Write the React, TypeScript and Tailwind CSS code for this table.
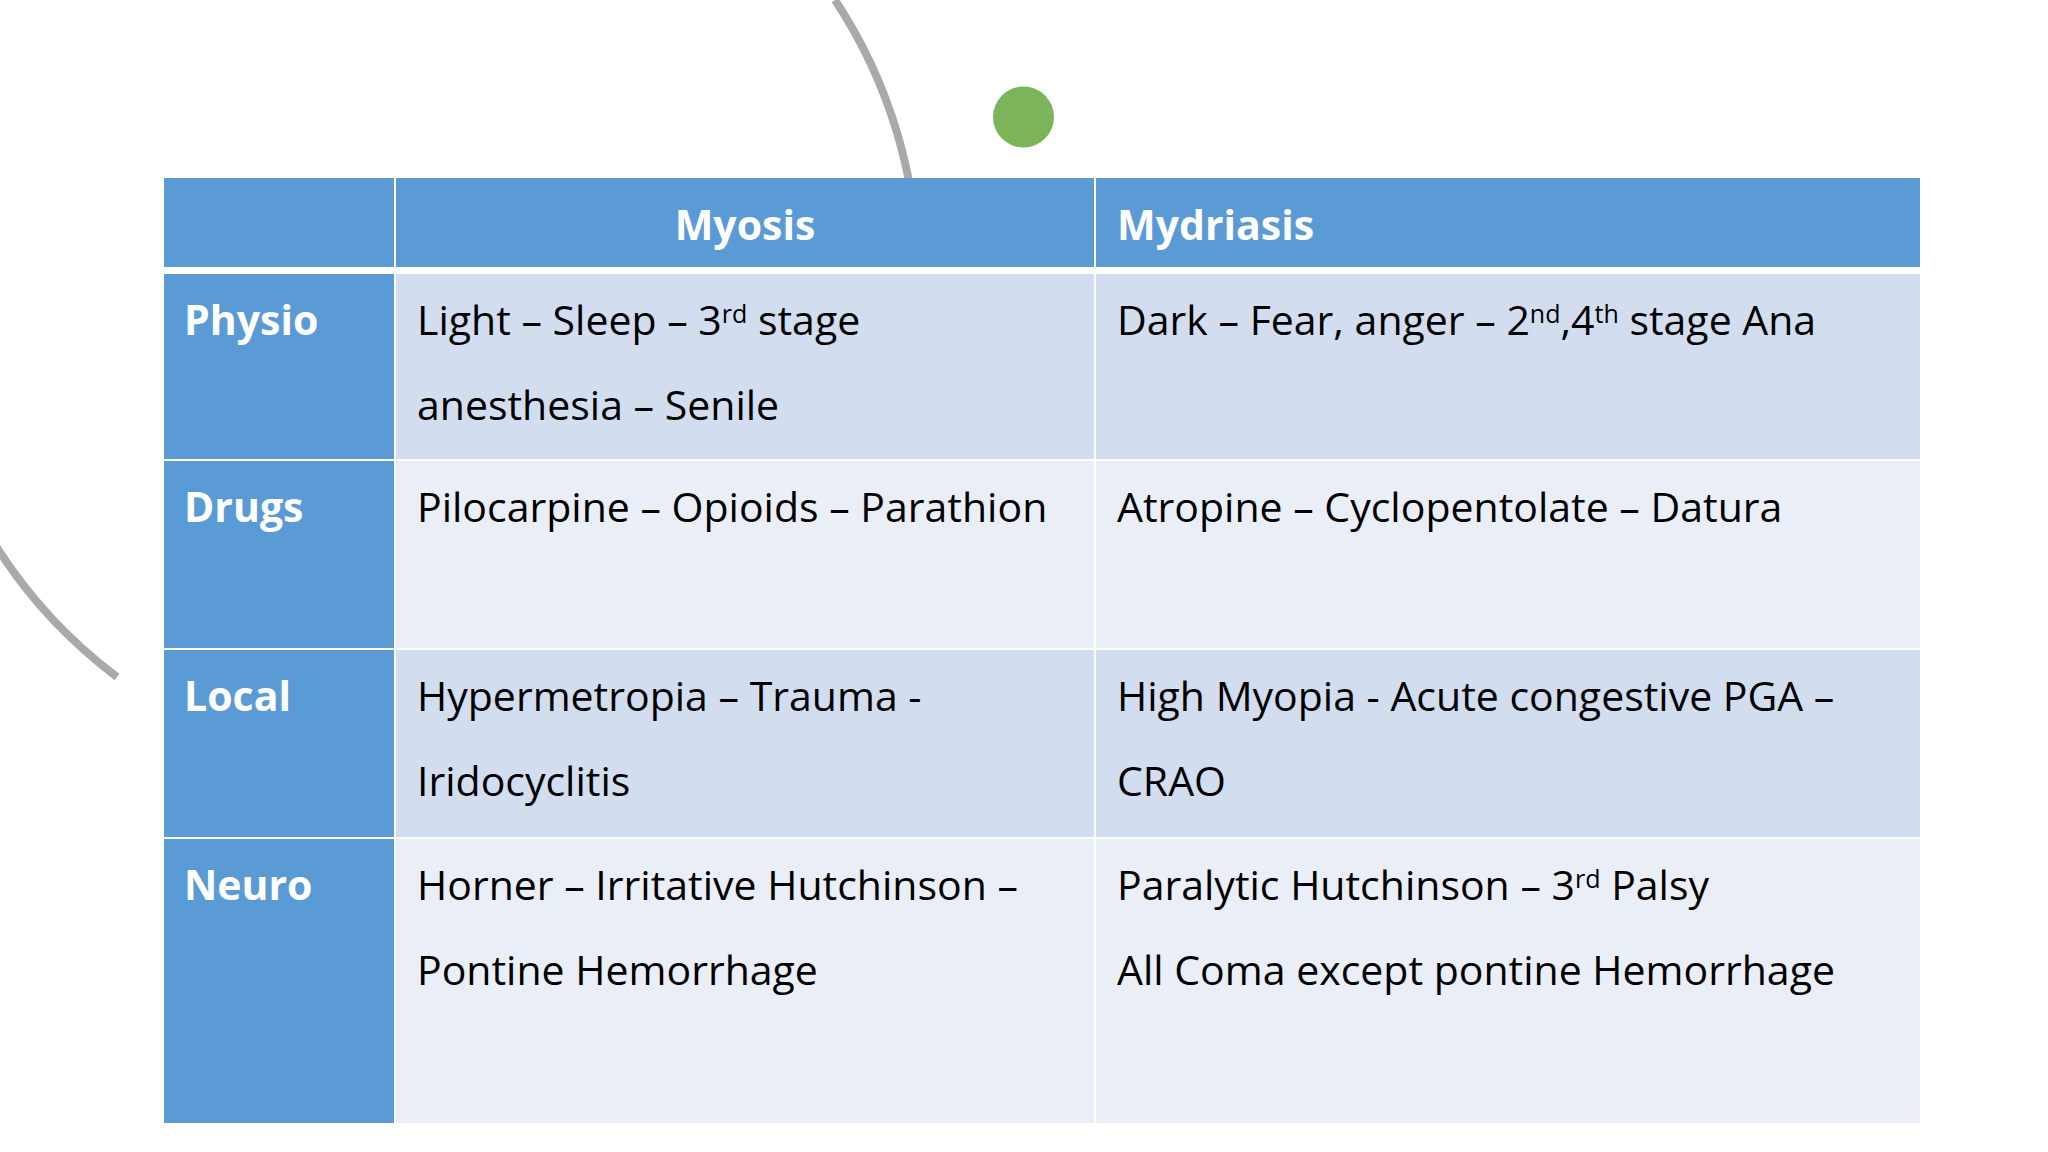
import type { ReactNode } from 'react';

const font = { fontFamily: '"Open Sans", Lato, sans-serif' };

function Sup({ children }: { children: ReactNode }) {
  return <sup className="text-[25px]">{children}</sup>;
}

function Label({ children }: { children: ReactNode }) {
  return (
    <div className="bg-[#5b9bd5] pl-[20px] pt-[3px] text-[41px] font-bold leading-[85px] text-white">
      {children}
    </div>
  );
}

function Cell({ children, shade }: { children: ReactNode; shade: 'dark' | 'light' }) {
  return (
    <div
      className={
        shade === 'dark'
          ? 'whitespace-nowrap bg-[#d2deef] pl-[21px] pt-[3px] text-[41px] leading-[85px] text-black'
          : 'whitespace-nowrap bg-[#eaeff7] pl-[21px] pt-[3px] text-[41px] leading-[85px] text-black'
      }
    >
      {children}
    </div>
  );
}

function Backdrop() {
  return (
    <svg className="absolute inset-0" width="2048" height="1152" viewBox="0 0 2048 1152">
      {/* one big circle, only two pieces of it show */}
      <path d="M 117 677 A 500 500 0 0 1 -82 276" fill="none" stroke="#a9a9a9" strokeWidth="8" />
      <path d="M 835 0 A 500 500 0 0 1 918 276" fill="none" stroke="#a9a9a9" strokeWidth="8" />
      <circle cx="1023.5" cy="117" r="30.5" fill="#7cb45a" />
    </svg>
  );
}

export default function App() {
  return (
    <div className="relative h-[1152px] w-[2048px] overflow-hidden bg-white" style={font}>
      <Backdrop />
      <div className="relative ml-[164px] mt-[178px] w-[1756px] bg-white">
        <div className="mb-[7px] grid h-[89px] grid-cols-[230px_698px_824px] gap-x-[2px] bg-white">
          <div className="bg-[#5b9bd5]" />
          <div className="bg-[#5b9bd5] pt-[4px] text-center text-[41px] font-bold leading-[85px] text-white">Myosis</div>
          <div className="bg-[#5b9bd5] pl-[21px] pt-[4px] text-[41px] font-bold leading-[85px] text-white">Mydriasis</div>
        </div>
        <div className="grid grid-cols-[230px_698px_824px] grid-rows-[185px_187px_187px_284px] gap-[2px] bg-white">
          <Label>Physio</Label>
          <Cell shade="dark">
            Light – Sleep – 3<Sup>rd</Sup> stage
            <br />
            anesthesia – Senile
          </Cell>
          <Cell shade="dark">
            Dark – Fear, anger – 2<Sup>nd</Sup>,4<Sup>th</Sup> stage Ana
          </Cell>

          <Label>Drugs</Label>
          <Cell shade="light">Pilocarpine – Opioids – Parathion</Cell>
          <Cell shade="light">Atropine – Cyclopentolate – Datura</Cell>

          <Label>Local</Label>
          <Cell shade="dark">
            Hypermetropia – Trauma -
            <br />
            Iridocyclitis
          </Cell>
          <Cell shade="dark">
            High Myopia - Acute congestive PGA –
            <br />
            CRAO
          </Cell>

          <Label>Neuro</Label>
          <Cell shade="light">
            Horner – Irritative Hutchinson –
            <br />
            Pontine Hemorrhage
          </Cell>
          <Cell shade="light">
            Paralytic Hutchinson – 3<Sup>rd</Sup> Palsy
            <br />
            All Coma except pontine Hemorrhage
          </Cell>
        </div>
      </div>
    </div>
  );
}
